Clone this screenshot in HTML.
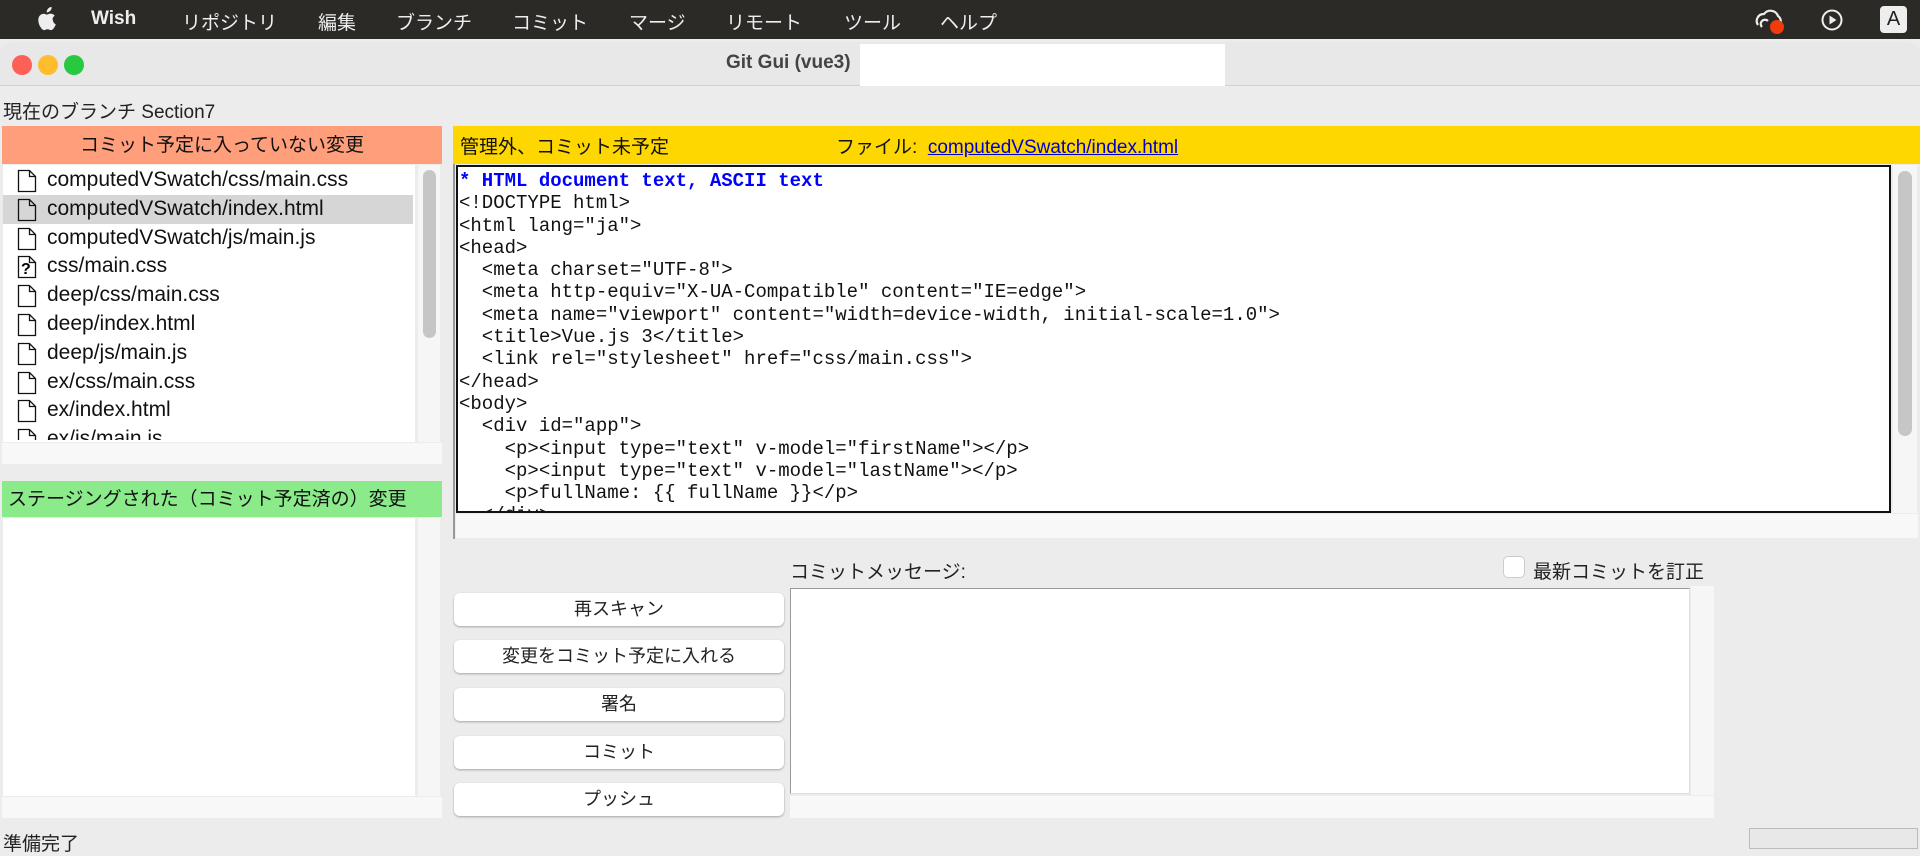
<!DOCTYPE html>
<html><head><meta charset="utf-8"><style>
*{margin:0;padding:0;box-sizing:border-box}
body{width:1920px;height:853px;overflow:hidden;background:#ececec;font-family:"Liberation Sans","Noto Sans CJK JP",sans-serif;position:relative}
.a{position:absolute}
.menu{left:0;top:0;width:1920px;height:39px;background:#2b2a27;color:#eee;font-size:19px}
.menu span{position:absolute;top:8px}
.win{left:0;top:42px;width:1920px;height:811px;background:#ececec;border-radius:12px 12px 0 0}
.title{left:0;top:42px;width:1920px;height:44px;background:#e8e8e8;border-radius:12px 12px 0 0;border-bottom:1px solid #d0d0d0}
.dot{width:20px;height:20px;border-radius:50%;top:55px}
.fl{font-size:21px;color:#111;line-height:28.8px}
.fl div{height:28.8px;padding-left:44px;position:relative;white-space:nowrap}
.fl svg{position:absolute;left:14px;top:3px}
.code{font-family:"Liberation Mono","DejaVu Sans Mono",monospace;font-size:19px;line-height:22.3px;white-space:pre;color:#111}
.btn{left:454px;width:330px;height:33px;background:#fff;border-radius:6px;box-shadow:0 1px 2px rgba(0,0,0,.3);text-align:center;font-size:18px;line-height:33px;color:#222}
</style></head><body>
<div class="a menu">
<svg class="a" style="left:36px;top:7px" width="20" height="24" viewBox="0 0 20 24"><path d="M14.5 3.5c-1 1.2-2.5 2-3.8 1.9c-.2-1.4.5-2.8 1.3-3.7C13 .6 14.5-.1 15.6 0c.2 1.4-.3 2.6-1.1 3.5zM16.5 12.6c0-2.6 2.1-3.8 2.2-3.9c-1.2-1.8-3.1-2-3.8-2c-1.6-.2-3.1.9-3.9.9c-.8 0-2-.9-3.4-.9C5.8 6.8 4.1 7.8 3.2 9.4c-1.9 3.3-.5 8.2 1.4 10.9c.9 1.3 2 2.8 3.4 2.8c1.4-.1 1.9-.9 3.5-.9c1.7 0 2.1.9 3.5.9c1.5 0 2.4-1.3 3.300-2.700c1-1.500 1.500-3 1.500-3.100c0 0-2.900-1.100-2.900-4.700z" fill="#eee"/></svg>
<span style="left:91px;font-weight:bold">Wish</span>
<span style="left:182px">リポジトリ</span>
<span style="left:318px">編集</span>
<span style="left:396px">ブランチ</span>
<span style="left:512px">コミット</span>
<span style="left:629px">マージ</span>
<span style="left:726px">リモート</span>
<span style="left:844px">ツール</span>
<span style="left:940px">ヘルプ</span>
<svg class="a" style="left:1752px;top:7px" width="36" height="28"><path d="M6 18a7 7 0 0 1 6-11a8 8 0 0 1 14 2a6 6 0 0 1 2 8" fill="none" stroke="#eee" stroke-width="2.2"/><path d="M10 20a4 4 0 0 1 6-6" fill="none" stroke="#eee" stroke-width="2.2"/><circle cx="25" cy="20" r="7" fill="#f03c0c"/></svg>
<svg class="a" style="left:1820px;top:8px" width="24" height="24"><circle cx="12" cy="12" r="9.5" fill="none" stroke="#eee" stroke-width="2"/><path d="M9.5 7.5v9l7-4.5z" fill="#eee"/></svg>
<div class="a" style="left:1880px;top:6px;width:27px;height:27px;background:#eee;border-radius:4px;color:#222;font-size:20px;text-align:center;line-height:27px">A</div>
</div>
<div class="a win"></div>
<div class="a title"></div>
<div class="a dot" style="left:12px;background:#fe5f57"></div>
<div class="a dot" style="left:38px;background:#febc2e"></div>
<div class="a dot" style="left:64px;background:#28c840"></div>
<div class="a" style="left:726px;top:52px;font-size:19px;font-weight:bold;color:#444">Git Gui (vue3)</div>
<div class="a" style="left:860px;top:44px;width:365px;height:42px;background:#fff"></div>
<div class="a" style="left:3px;top:97px;font-size:19px;color:#222">現在のブランチ Section7</div>
<!-- left -->
<div class="a" style="left:2px;top:126px;width:440px;height:38px;background:#fe9e7b;font-size:19px;text-align:center;line-height:40px;color:#111">コミット予定に入っていない変更</div>
<div class="a" style="left:3px;top:165px;width:412px;height:277px;background:#fff;overflow:hidden"></div>
<div class="a" style="left:418px;top:165px;width:22px;height:277px;background:#f6f6f6"></div>
<div class="a" style="left:423px;top:170px;width:13px;height:168px;background:#c6c6c6;border-radius:7px"></div>
<div class="a fl" style="left:3px;top:166px;width:412px;height:274px;overflow:hidden">
<div><svg width="20" height="24"><path d="M1.5 1.5h11l6 6v15h-17z M12.5 1.5v6h6" fill="#fff" stroke="#111" stroke-width="1.3"/></svg>computedVSwatch/css/main.css</div>
<div style="background:#d6d6d6;margin-right:2px"><svg width="20" height="24"><path d="M1.5 1.5h11l6 6v15h-17z M12.5 1.5v6h6" fill="none" stroke="#111" stroke-width="1.3"/></svg>computedVSwatch/index.html</div>
<div><svg width="20" height="24"><path d="M1.5 1.5h11l6 6v15h-17z M12.5 1.5v6h6" fill="#fff" stroke="#111" stroke-width="1.3"/></svg>computedVSwatch/js/main.js</div>
<div><svg width="20" height="24"><path d="M1.5 1.5h11l6 6v15h-17z M12.5 1.5v6h6" fill="#fff" stroke="#111" stroke-width="1.3"/><text x="4" y="19" font-size="16" font-family="Liberation Sans" font-weight="bold">?</text></svg>css/main.css</div>
<div><svg width="20" height="24"><path d="M1.5 1.5h11l6 6v15h-17z M12.5 1.5v6h6" fill="#fff" stroke="#111" stroke-width="1.3"/></svg>deep/css/main.css</div>
<div><svg width="20" height="24"><path d="M1.5 1.5h11l6 6v15h-17z M12.5 1.5v6h6" fill="#fff" stroke="#111" stroke-width="1.3"/></svg>deep/index.html</div>
<div><svg width="20" height="24"><path d="M1.5 1.5h11l6 6v15h-17z M12.5 1.5v6h6" fill="#fff" stroke="#111" stroke-width="1.3"/></svg>deep/js/main.js</div>
<div><svg width="20" height="24"><path d="M1.5 1.5h11l6 6v15h-17z M12.5 1.5v6h6" fill="#fff" stroke="#111" stroke-width="1.3"/></svg>ex/css/main.css</div>
<div><svg width="20" height="24"><path d="M1.5 1.5h11l6 6v15h-17z M12.5 1.5v6h6" fill="#fff" stroke="#111" stroke-width="1.3"/></svg>ex/index.html</div>
<div><svg width="20" height="24"><path d="M1.5 1.5h11l6 6v15h-17z M12.5 1.5v6h6" fill="#fff" stroke="#111" stroke-width="1.3"/></svg>ex/js/main.js</div>
</div>
<div class="a" style="left:2px;top:443px;width:440px;height:21px;background:#f8f8f8"></div>
<div class="a" style="left:2px;top:481px;width:440px;height:36px;background:#8bea8a;font-size:19px;line-height:38px;padding-left:6px;color:#111">ステージングされた（コミット予定済の）変更</div>
<div class="a" style="left:3px;top:518px;width:412px;height:278px;background:#fff"></div>
<div class="a" style="left:418px;top:518px;width:22px;height:278px;background:#f6f6f6"></div>
<div class="a" style="left:2px;top:797px;width:440px;height:21px;background:#f8f8f8"></div>
<!-- right -->
<div class="a" style="left:453px;top:126px;width:1467px;height:38px;background:#ffd700;font-size:19px;line-height:44px;color:#111"><span class="a" style="left:7px">管理外、コミット未予定</span><span class="a" style="left:383px">ファイル:&nbsp; <span style="color:#00c;text-decoration:underline">computedVSwatch/index.html</span></span></div>
<div class="a" style="left:453px;top:164px;width:2px;height:375px;background:#999"></div>
<div class="a" style="left:456px;top:165px;width:1435px;height:348px;background:#fff;border:2px solid #111;overflow:hidden">
<div class="code" style="padding:3px 0 0 1px"><span style="color:#00f;font-weight:bold">* HTML document text, ASCII text</span>
&lt;!DOCTYPE html&gt;
&lt;html lang="ja"&gt;
&lt;head&gt;
  &lt;meta charset="UTF-8"&gt;
  &lt;meta http-equiv="X-UA-Compatible" content="IE=edge"&gt;
  &lt;meta name="viewport" content="width=device-width, initial-scale=1.0"&gt;
  &lt;title&gt;Vue.js 3&lt;/title&gt;
  &lt;link rel="stylesheet" href="css/main.css"&gt;
&lt;/head&gt;
&lt;body&gt;
  &lt;div id="app"&gt;
    &lt;p&gt;&lt;input type="text" v-model="firstName"&gt;&lt;/p&gt;
    &lt;p&gt;&lt;input type="text" v-model="lastName"&gt;&lt;/p&gt;
    &lt;p&gt;fullName: {{ fullName }}&lt;/p&gt;
  &lt;/div&gt;</div></div>
<div class="a" style="left:1893px;top:165px;width:24px;height:348px;background:#f6f6f6"></div>
<div class="a" style="left:1898px;top:171px;width:14px;height:265px;background:#c6c6c6;border-radius:7px"></div>
<div class="a" style="left:456px;top:514px;width:1462px;height:24px;background:#f8f8f8"></div>
<!-- commit area -->
<div class="a" style="left:790px;top:557px;font-size:19px;color:#222">コミットメッセージ:</div>
<div class="a" style="left:1503px;top:556px;width:22px;height:22px;background:#fff;border:1px solid #ccc;border-radius:5px"></div>
<div class="a" style="left:1533px;top:557px;font-size:19px;color:#222">最新コミットを訂正</div>
<div class="a btn" style="top:593px">再スキャン</div>
<div class="a btn" style="top:640px">変更をコミット予定に入れる</div>
<div class="a btn" style="top:688px">署名</div>
<div class="a btn" style="top:736px">コミット</div>
<div class="a btn" style="top:783px">プッシュ</div>
<div class="a" style="left:790px;top:588px;width:900px;height:206px;background:#fff;border:1px solid #999;border-bottom-color:#ddd;border-right-color:#ddd"></div>
<div class="a" style="left:1691px;top:586px;width:23px;height:209px;background:#f6f6f6"></div>
<div class="a" style="left:790px;top:796px;width:924px;height:22px;background:#f8f8f8"></div>
<div class="a" style="left:3px;top:829px;font-size:19px;color:#222">準備完了</div>
<div class="a" style="left:1749px;top:828px;width:169px;height:21px;border:1px solid #bbb;background:#e8e8e8"></div>
</body></html>
